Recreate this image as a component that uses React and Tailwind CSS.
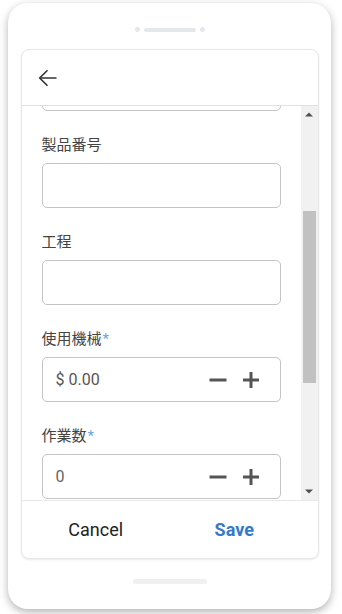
import { useEffect, useLayoutEffect, useRef } from "react";

const fields = [
  { label: "品番", type: "text" },
  { label: "製品番号", type: "text" },
  { label: "工程", type: "text" },
  { label: "使用機械", req: true, type: "money" },
  { label: "作業数", req: true, type: "count" },
];

function Minus() {
  return (
    <svg width="18" height="18" viewBox="0 0 18 18">
      <rect x="0.5" y="7.5" width="17" height="3" fill="#555" />
    </svg>
  );
}

function Plus() {
  return (
    <svg width="18" height="18" viewBox="0 0 18 18">
      <rect x="1" y="7.5" width="16" height="3" fill="#555" />
      <rect x="7.5" y="1" width="3" height="16" fill="#555" />
    </svg>
  );
}

function Field({ f }) {
  return (
    <div className="flex flex-col">
      <div className="h-[24px] leading-[24px] text-[15px] text-[#444] mb-[6px]">
        {f.label}
        {f.req && <span className="text-[#6aa6e0] ml-[1px]">*</span>}
      </div>
      <div className="h-[45px] border border-[#c4c4c4] rounded-[5px] flex items-center pl-[13px] pr-[20px]">
        {f.type === "money" && (
          <span className="text-[16px] text-[#555] flex-1">$ 0.00</span>
        )}
        {f.type === "count" && (
          <span className="text-[16px] text-[#666] flex-1">0</span>
        )}
        {f.type !== "text" && (
          <div className="flex items-center gap-[15px] ml-auto">
            <Minus />
            <Plus />
          </div>
        )}
      </div>
    </div>
  );
}

function ScrollBar() {
  return (
    <div className="w-[17px] shrink-0 bg-[#f1f1f1] flex flex-col">
      <div className="h-[17px] flex items-center justify-center">
        <svg width="8" height="5" viewBox="0 0 8 5">
          <polygon points="0,4.5 8,4.5 4,0.5" fill="#505050" />
        </svg>
      </div>
      <div className="flex-1 flex flex-col px-[2px]">
        <div className="mt-[88px] h-[172px] bg-[#c1c1c1]" />
      </div>
      <div className="h-[17px] flex items-center justify-center">
        <svg width="8" height="5" viewBox="0 0 8 5">
          <polygon points="0,0.5 8,0.5 4,4.5" fill="#505050" />
        </svg>
      </div>
    </div>
  );
}

export default function App() {
  const ref = useRef(null);
  useLayoutEffect(() => {
    if (ref.current) ref.current.scrollTop = 109;
  }, []);
  useEffect(() => {
    if (ref.current) ref.current.scrollTop = 109;
  }, []);

  return (
    <div className="bg-white w-[342px] h-[614px] pt-[3px] pl-[8px] font-['Roboto','Noto_Sans_CJK_JP',sans-serif]">
      <div className="w-[323px] h-[606px] rounded-[20px] bg-white shadow-[0_3px_8px_rgba(0,0,0,0.3)] flex flex-col items-center">
        <div className="mt-[24px] h-[5px] flex items-center gap-[4px]">
          <div className="w-[5px] h-[5px] rounded-full bg-[#e5e7eb]" />
          <div className="w-[52px] h-[4px] rounded-full bg-[#e5e7eb]" />
          <div className="w-[5px] h-[5px] rounded-full bg-[#e5e7eb]" />
        </div>
        <div className="mt-[17px] w-[298px] h-[510px] border border-[#e6e6e6] rounded-[8px] shadow-[0_1px_2px_rgba(0,0,0,0.08)] flex flex-col overflow-hidden bg-white">
          <div className="h-[56px] shrink-0 border-b border-[#e0e0e0] flex items-center pl-[16px]">
            <svg width="20" height="20" viewBox="0 0 20 20" fill="none">
              <path d="M18.5 10H2" stroke="#333" strokeWidth="1.6" />
              <path d="M9.5 2.2L1.7 10l7.8 7.8" stroke="#333" strokeWidth="1.6" />
            </svg>
          </div>
          <div className="h-[394px] shrink-0 flex">
            <div ref={ref} className="flex-1 overflow-hidden">
              <div className="pt-[39px] pb-[41px] pl-[20px] pr-[20px] flex flex-col gap-[22px]">
                {fields.map((f) => (
                  <Field key={f.label} f={f} />
                ))}
              </div>
            </div>
            <ScrollBar />
          </div>
          <div className="flex-1 border-t border-[#e8e8e8] flex items-center pl-[5px] pr-[14px]">
            <button className="flex-1 text-[18px] text-[#222]">Cancel</button>
            <button className="flex-1 text-[18px] font-bold text-[#3579c8]">Save</button>
          </div>
        </div>
        <div className="mt-[20px] w-[74px] h-[5px] rounded-full bg-[#f0f0f0]" />
      </div>
    </div>
  );
}
